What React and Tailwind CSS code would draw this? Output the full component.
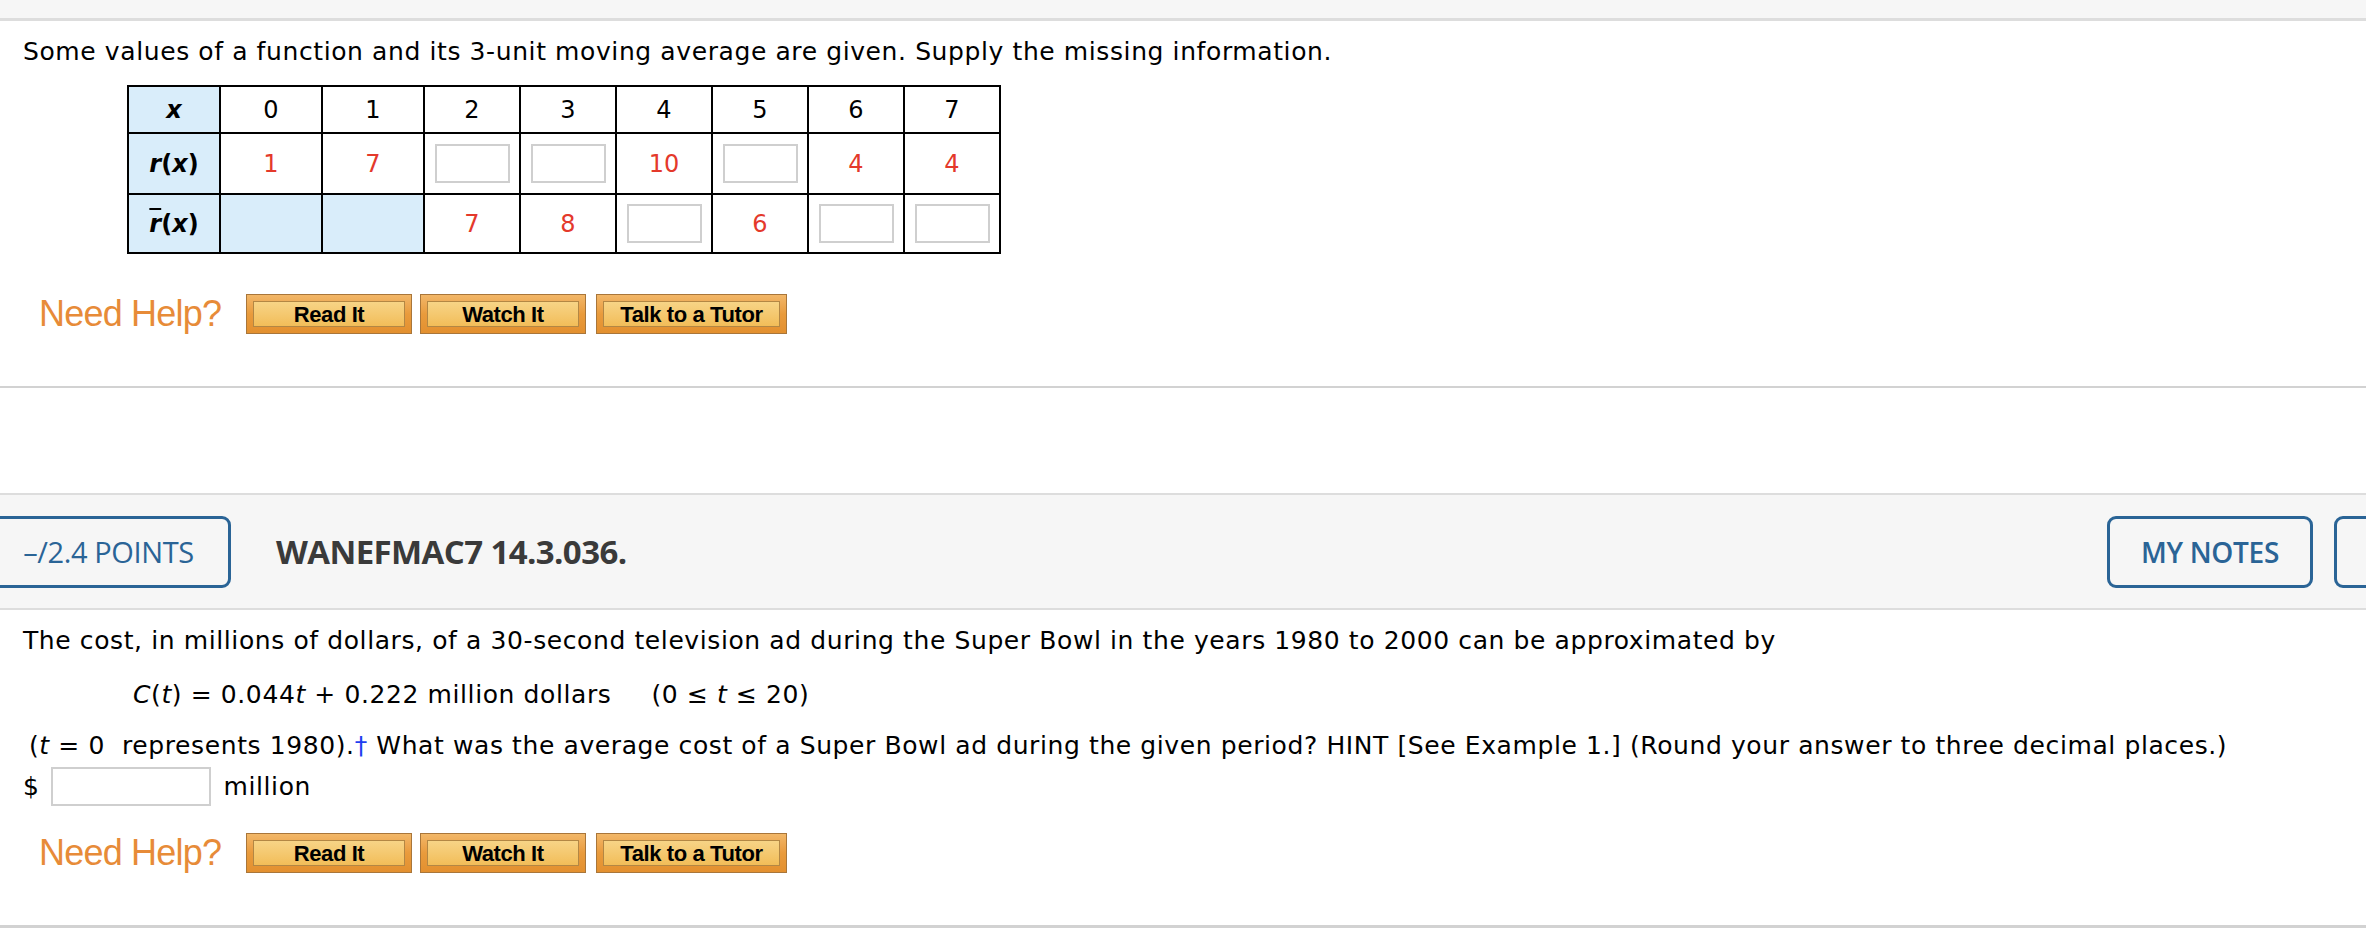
import React from "react";

const body = "font-['DejaVu_Sans',Verdana,sans-serif]";
const os = "font-['Open_Sans',sans-serif]";

function HelpButton({ label, w }) {
  return (
    <div
      className={`${w} h-[40px] shrink-0 border border-[#a9763a] bg-gradient-to-b from-[#f2b768] via-[#e99b3c] to-[#e3902f] p-[6px]`}
    >
      <div className="flex h-full w-full items-center justify-center border border-[#b38744] bg-gradient-to-b from-[#f7d486] to-[#f2bd58] font-['Liberation_Sans',Arial,sans-serif] text-[22px] font-bold tracking-[-0.4px] text-black">
        {label}
      </div>
    </div>
  );
}

function NeedHelp() {
  return (
    <div className="flex h-[40px] items-center">
      <div className="ml-[39px] w-[207px] shrink-0 font-['Liberation_Sans',Arial,sans-serif] text-[36px] leading-none tracking-[-0.8px] text-[#e78b38]">
        Need Help?
      </div>
      <HelpButton label="Read It" w="w-[166px]" />
      <div className="w-[8px] shrink-0" />
      <HelpButton label="Watch It" w="w-[166px]" />
      <div className="w-[10px] shrink-0" />
      <HelpButton label="Talk to a Tutor" w="w-[191px]" />
    </div>
  );
}

function Box({ w = "w-[75px]" }) {
  return <div className={`${w} h-[39px] border-2 border-[#cfcfcf] bg-white`} />;
}

const red = "text-[#e4392b]";

function Cell({ children, blue, className = "" }) {
  return (
    <div
      className={`flex items-center justify-center border-b-2 border-r-2 border-black ${
        blue ? "bg-[#d9edfa]" : "bg-white"
      } ${className}`}
    >
      {children}
    </div>
  );
}

function DataTable() {
  const xs = ["0", "1", "2", "3", "4", "5", "6", "7"];
  const r = ["1", "7", null, null, "10", null, "4", "4"];
  const rb = ["b", "b", "7", "8", null, "6", null, null];
  return (
    <div className="ml-[104px] grid w-fit grid-cols-[92px_102px_102px_96px_96px_96px_96px_96px_96px] grid-rows-[47px_61px_59px] border-l-2 border-t-2 border-black text-[24px] tracking-normal">
      <Cell blue>
        <b className="italic">x</b>
      </Cell>
      {xs.map((x) => (
        <Cell key={"x" + x}>{x}</Cell>
      ))}
      <Cell blue>
        <b>
          <i>r</i>(<i>x</i>)
        </b>
      </Cell>
      {r.map((v, i) => (
        <Cell key={"r" + i}>{v ? <span className={red}>{v}</span> : <Box />}</Cell>
      ))}
      <Cell blue>
        <b>
          <i className="overline decoration-[2px]">r</i>(<i>x</i>)
        </b>
      </Cell>
      {rb.map((v, i) =>
        v === "b" ? (
          <Cell key={"rb" + i} blue />
        ) : (
          <Cell key={"rb" + i}>{v ? <span className={red}>{v}</span> : <Box />}</Cell>
        )
      )}
    </div>
  );
}

function OutlineBtn({ children, className = "" }) {
  return (
    <div
      className={`flex h-[72px] shrink-0 items-center justify-center rounded-[9px] border-[3px] border-[#2a6496] text-[#2a6496] ${className}`}
    >
      {children}
    </div>
  );
}

export default function App() {
  return (
    <div className={`h-[932px] w-[2366px] overflow-hidden bg-white text-black ${body}`}>
      {/* previous question's bottom band */}
      <div className="h-[21px] border-b-[3px] border-[#dddddd] bg-[#f6f6f6]" />

      {/* question 1 body */}
      <div className="pl-[23px]">
        <p className="mt-[13px] text-[25px] leading-[36px] tracking-[0.6px]">
          Some values of a function and its 3-unit moving average are given. Supply the missing information.
        </p>
        <div className="mt-[15px]">
          <DataTable />
        </div>
      </div>
      <div className="mt-[40px]">
        <NeedHelp />
      </div>
      <div className="mt-[52px] h-[2px] bg-[#d2d2d2]" />

      {/* question 2 header */}
      <div className="mt-[105px] flex h-[117px] items-center border-y-2 border-[#dddddd] bg-[#f6f6f6]">
        <div className="flex min-w-0 flex-1 items-center">
          <OutlineBtn className={`ml-[-14px] w-[245px] ${os} text-[29px] tracking-[-0.4px]`}>
            –/2.4 POINTS
          </OutlineBtn>
          <div className={`ml-[45px] ${os} text-[33px] font-bold tracking-[-0.6px] text-[#3a3a3a]`}>
            WANEFMAC7 14.3.036.
          </div>
        </div>
        <div className="flex w-[259px] shrink-0 gap-[21px] overflow-hidden">
          <OutlineBtn className={`w-[206px] ${os} text-[28px] font-semibold tracking-[-0.3px]`}>
            MY NOTES
          </OutlineBtn>
          <OutlineBtn className="w-[206px]" />
        </div>
      </div>

      {/* question 2 body */}
      <div className="pl-[23px] text-[25px] leading-[36px] tracking-[0.6px]">
        <p className="mt-[13px]">
          The cost, in millions of dollars, of a 30-second television ad during the Super Bowl in the years 1980 to 2000 can be approximated by
        </p>
        <p className="mt-[18px] pl-[110px]">
          <i>C</i>(<i>t</i>) = 0.044<i>t</i> + 0.222 million dollars
          <span className="ml-[40px]">
            (0 ≤ <i>t</i> ≤ 20)
          </span>
        </p>
        <p className="mt-[15px] pl-[6px]">
          (<i>t</i> = 0&nbsp; represents 1980).<span className="text-[#1f3ff0]">†</span> What was the average cost of a Super Bowl ad during the given period? HINT [See Example 1.] (Round your answer to three decimal places.)
        </p>
        <div className="mt-[3px] flex h-[39px] items-center">
          <span>$</span>
          <div className="ml-[11px]">
            <Box w="w-[160px]" />
          </div>
          <span className="ml-[13px]">million</span>
        </div>
      </div>
      <div className="mt-[27px]">
        <NeedHelp />
      </div>
      <div className="mt-[52px] h-[3px] bg-[#d2d2d2]" />
    </div>
  );
}
